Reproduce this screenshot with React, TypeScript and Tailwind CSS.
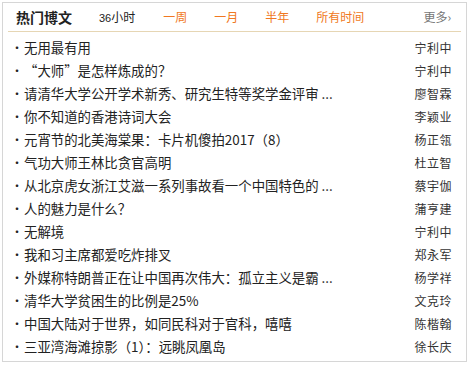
const tabs = [
	{ label: "一周" },
	{ label: "一月" },
	{ label: "半年" },
	{ label: "所有时间" },
];

const posts: { title: string; author: string }[] = [
	{ title: "无用最有用", author: "宁利中" },
	{ title: "“大师”是怎样炼成的？", author: "宁利中" },
	{ title: "请清华大学公开学术新秀、研究生特等奖学金评审 ...", author: "廖智霖" },
	{ title: "你不知道的香港诗词大会", author: "李颖业" },
	{ title: "元宵节的北美海棠果：卡片机傻拍2017（8）", author: "杨正瓴" },
	{ title: "气功大师王林比贪官高明", author: "杜立智" },
	{ title: "从北京虎女浙江艾滋一系列事故看一个中国特色的 ...", author: "蔡宇伽" },
	{ title: "人的魅力是什么？", author: "蒲亨建" },
	{ title: "无解境", author: "宁利中" },
	{ title: "我和习主席都爱吃炸排叉", author: "郑永军" },
	{ title: "外媒称特朗普正在让中国再次伟大：孤立主义是霸 ...", author: "杨学祥" },
	{ title: "清华大学贫困生的比例是25%", author: "文克玲" },
	{ title: "中国大陆对于世界，如同民科对于官科，嘻嘻", author: "陈楷翰" },
	{ title: "三亚湾海滩掠影（1）：远眺凤凰岛", author: "徐长庆" },
];

const App = () => {
	return (
		<div className="w-[474px] h-[370px] bg-white pt-[2px] pl-[2px] font-['Noto_Sans_CJK_SC',sans-serif]">
			<div className="w-[465px] h-[360px] border border-[#d6d6d6] flex flex-col">
				<div className="mx-[5px] h-[29px] border-b border-[#e6d6b4] flex flex-row items-center pl-[8px] pr-[10px]">
					<span className="text-[14px] font-bold text-[#222]">热门博文</span>
					<span className="ml-[27px] text-[12px] text-[#222]">
						<span className="text-[11px] font-['Liberation_Sans',sans-serif]">36</span>小时
					</span>
					<div className="flex flex-row ml-[28px] gap-x-[27px] text-[12px] text-[#f07822]">
						{tabs.map((t) => (
							<span key={t.label}>{t.label}</span>
						))}
					</div>
					<span className="ml-auto text-[12px] text-[#777]">更多›</span>
				</div>
				<ul className="mt-[4px] flex flex-col">
					{posts.map((p, i) => (
						<li
							key={i}
							className="h-[23px] flex flex-row items-center pl-[8px] pr-[14px] text-[#222]"
						>
							<span className="w-[13px] text-[12px]">·</span>
							<span className="text-[13.4px] whitespace-nowrap">{p.title}</span>
							<span className="ml-auto text-[12px] tracking-[0.5px] text-[#333]">
								{p.author}
							</span>
						</li>
					))}
				</ul>
			</div>
		</div>
	);
};

export default App;
